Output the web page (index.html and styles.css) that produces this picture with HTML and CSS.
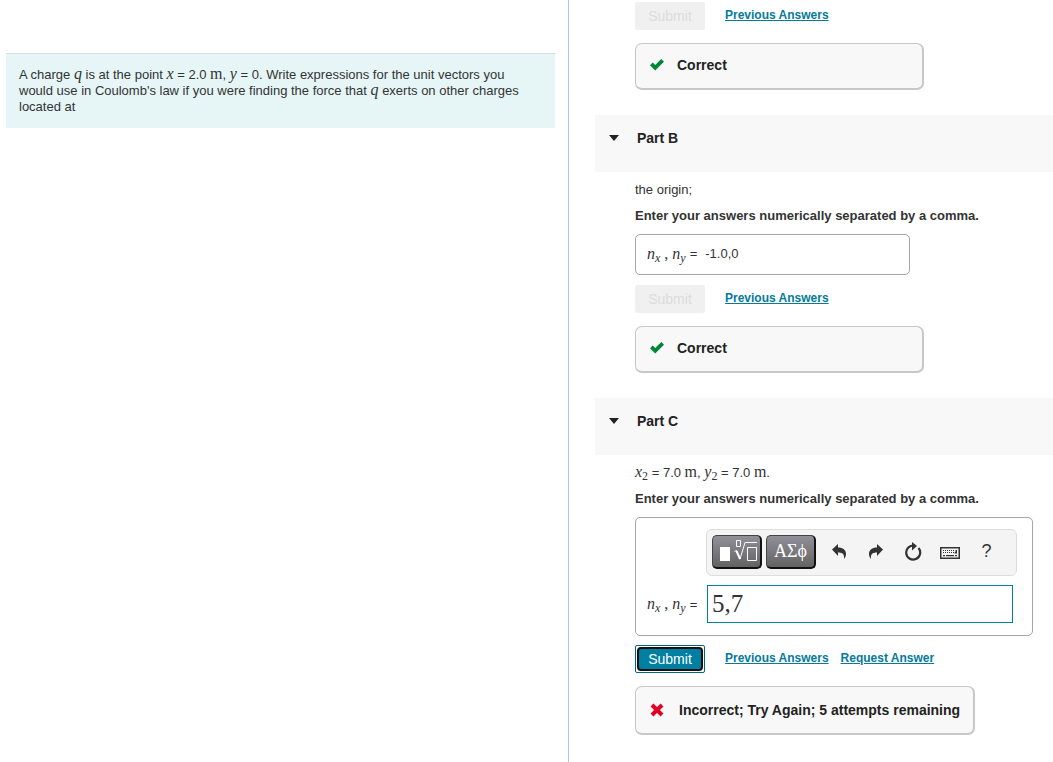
FILE: index.html
```
<!DOCTYPE html>
<html lang="en">
<head>
<meta charset="utf-8">
<title>Unit vectors</title>
<link rel="stylesheet" href="styles.css">
</head>
<body>
<main class="layout">
  <section class="question">
    <p class="prompt">A charge <i class="math">q</i> is at the point <i class="math">x</i> = 2.0 <span class="math">m</span>, <i class="math">y</i> = 0. Write expressions for the unit vectors you would use in Coulomb's law if you were finding the force that <i class="math">q</i> exerts on other charges located at</p>
  </section>
  <div class="answers">
    <section class="part">
      <div class="actions">
        <button class="submit" type="button" disabled>Submit</button>
        <a class="link" href="#">Previous Answers</a>
      </div>
      <div class="result">
        <svg class="mark" viewBox="0 0 14 12" aria-hidden="true"><path fill="#008638" d="M0 6.300 2.700 3.600 5.200 6 11.300 0 14 2.700 5.200 11.500z"/></svg>
        <span>Correct</span>
      </div>
    </section>

    <section>
      <h2 class="part-header"><button class="toggle" type="button"><svg class="caret" viewBox="0 0 10 6" aria-hidden="true"><path d="M0 0h10L5 6z"/></svg>Part B</button></h2>
      <div class="part">
        <p class="text">the origin;</p>
        <p class="instruction">Enter your answers numerically separated by a comma.</p>
        <div class="given"><span class="variables"><i>n<sub>x</sub></i> , <i>n<sub>y</sub></i></span><span>=</span><span class="value">-1.0,0</span></div>
        <div class="actions">
          <button class="submit" type="button" disabled>Submit</button>
          <a class="link" href="#">Previous Answers</a>
        </div>
        <div class="result">
          <svg class="mark" viewBox="0 0 14 12" aria-hidden="true"><path fill="#008638" d="M0 6.300 2.700 3.600 5.200 6 11.300 0 14 2.700 5.200 11.500z"/></svg>
          <span>Correct</span>
        </div>
      </div>
    </section>

    <section>
      <h2 class="part-header"><button class="toggle" type="button"><svg class="caret" viewBox="0 0 10 6" aria-hidden="true"><path d="M0 0h10L5 6z"/></svg>Part C</button></h2>
      <div class="part">
        <p class="text"><span class="math"><i>x</i><sub>2</sub></span> = 7.0 <span class="math">m</span>, <span class="math"><i>y</i><sub>2</sub></span> = 7.0 <span class="math">m</span>.</p>
        <p class="instruction">Enter your answers numerically separated by a comma.</p>
        <div class="editor">
          <div class="toolbar">
            <button class="palette" type="button" aria-label="Templates"><svg width="40" height="26" viewBox="0 0 40 26" fill="none" stroke="#fff"><path fill="#fff" stroke="none" d="M3 9h10v14H3z"/><path d="M19.500 2.500h4v6h-4zM30.500 9.500h9v13h-9zM17.500 13.500l2-1 3.500 8.500 5-16.500h12"/><path stroke-width="2" d="m19.500 13 3.500 8"/></svg></button>
            <button class="palette" type="button">ΑΣϕ</button>
            <button class="tool" type="button" aria-label="Undo"><svg width="14" height="15" viewBox="0 0 14 15"><path d="M0 5.500 6 0v3.500c5 0 8 2.500 8 6.500 0 2-.8 3.700-2 5 .5-4.500-1-6.500-6-6.500V12z"/></svg></button>
            <button class="tool" type="button" aria-label="Redo"><svg width="14" height="15" viewBox="0 0 14 15"><path d="M14 5.500 8 0v3.500C3 3.500 0 6 0 10c0 2 .8 3.700 2 5-.5-4.500 1-6.500 6-6.500V12z"/></svg></button>
            <button class="tool" type="button" aria-label="Reset"><svg width="18" height="20" viewBox="0 0 18 20"><path fill="none" stroke="#333" stroke-width="2.200" d="M11 3.800A7 7 0 1 0 14.500 6"/><path d="M8 0l5 4-5 4.500z"/></svg></button>
            <button class="tool" type="button" aria-label="Keyboard"><svg class="keyboard" width="20" height="12" viewBox="0 0 20 12"><path fill="none" stroke="#333" stroke-width="1.500" d="M.75.75h18.500v10.500H.75z"/><path fill="none" stroke="#333" stroke-dasharray="1 1" d="M3 3.500h12M3 5.500h13"/><path d="M3 8h2v1.200H3zM6 8h8v1.200H6zM15 8h2v1.200h-2zM15.500 3H17v3.500h-2.500V5.500h1z"/></svg></button>
            <button class="tool help" type="button" aria-label="Help">?</button>
          </div>
          <label class="variables answer-label" for="answer"><i>n<sub>x</sub></i> , <i>n<sub>y</sub></i> <span class="equals">=</span></label>
          <input class="answer" id="answer" type="text" value="5,7">
        </div>
        <div class="actions">
          <button class="submit focused" type="button"><span>Submit</span></button>
          <a class="link" href="#">Previous Answers</a>
          <a class="link" href="#">Request Answer</a>
        </div>
        <div class="result incorrect">
          <svg class="mark" viewBox="0 0 14 14" aria-hidden="true"><path fill="none" stroke="#e00024" stroke-width="4" d="m2 2 10 10M12 2 2 12"/></svg>
          <span>Incorrect; Try Again; 5 attempts remaining</span>
        </div>
      </div>
    </section>
  </div>
</main>
</body>
</html>
```
FILE: styles.css
```
* { box-sizing: border-box; }
body { margin: 0; background: #fff; color: #333; font: 13px/16px "Liberation Sans", Arial, sans-serif; }
h2, p { margin: 0; }
button, input { font-family: inherit; }
sub { font-size: 12px; line-height: 0; vertical-align: -3px; }
.layout { display: grid; grid-template-columns: 569fr 484fr; min-height: 100vh; }
.question { padding: 53px 13px 0 6px; border-right: 1px solid #b0c8da; }
.prompt { padding: 13px 32px 13px 13px; border-top: 1px solid #d5dfdf; background: #e6f6f6; }
.math, .variables { font-family: "Liberation Serif", "Times New Roman", serif; font-size: 16px; line-height: 14px; }
.answers { padding: 2px 0 28px 26px; }
.part { padding: 0 20px 0 40px; }
.actions { display: flex; align-items: flex-start; gap: 12px; }
.submit { width: 70px; height: 28px; margin-right: 8px; padding: 0; border: 0; border-radius: 2px; background: #007fa3; color: #fff; font-size: 14px; }
.submit:disabled { background: #f0f0f0; color: #dcdcdc; }
.submit.focused { display: flex; padding: 1px; border: 1px solid #006580; background: #fff; }
.submit.focused span { display: grid; place-items: center; width: 100%; height: 100%; border: 2px solid #111; border-radius: 4px; background: #007fa3; }
.link { padding-top: 5px; color: #047a9c; font-size: 12px; font-weight: bold; }
.result { display: flex; align-items: center; gap: 13px; width: 289px; min-height: 47px; margin: 13px 0 25px; padding: 0 14px 2px; border: 1px solid #c7c7c7; border-right-width: 2px; border-bottom-width: 2px; border-radius: 7px; background: #f8f8f8; color: #222; font-size: 14px; font-weight: bold; }
.result.incorrect { gap: 15px; width: fit-content; min-height: 49px; margin-bottom: 0; padding: 0 13px 0 14px; }
.mark { flex: none; width: 14px; }
.part-header { background: #f8f8f8; font-size: 14px; }
.toggle { display: flex; align-items: center; gap: 18px; width: 100%; min-height: 57px; padding: 0 14px 11px; border: 0; background: none; color: #222; font-size: 14px; font-weight: bold; }
.caret { width: 10px; height: 6px; fill: #222; }
.text { padding-top: 10px; }
.instruction { padding: 10px 0; font-weight: bold; }
.given { display: flex; align-items: center; gap: 4px; width: 275px; min-height: 41px; margin-bottom: 10px; padding: 0 11px 2px; border: 1px solid #a6a6a6; border-radius: 5px; }
.value { margin-left: 4px; }
.editor { display: grid; grid-template-columns: 59px 1fr; row-gap: 9px; align-items: center; margin-bottom: 9px; padding: 11px 15px 12px 11px; border: 1px solid #a6a6a6; border-radius: 5px; }
.toolbar { grid-column: 2; display: flex; align-items: center; height: 47px; padding: 0 5px 2px; border: 1px solid #ddd; border-radius: 6px; background: #f4f4f4; }
.palette { display: grid; place-items: center; width: 50px; height: 34px; margin-right: 4px; padding: 0; border: 1px solid #444; border-right: 2px solid #111; border-bottom: 2px solid #111; border-radius: 5px; background: linear-gradient(#918f99, #636363); color: #fff; font: 18px "Liberation Serif", serif; }
.tool { display: grid; place-items: center; width: 37px; height: 34px; padding: 0; border: 0; background: none; fill: #333; color: #333; }
.keyboard { margin-top: 2px; }
.help { font-size: 18px; }
.answer-label { white-space: nowrap; }
.equals { font: 13px "Liberation Sans", sans-serif; }
.answer { width: calc(100% - 5px); height: 38px; margin-left: 1px; padding: 0 4px; border: 1px solid #007fa3; color: #333; font: 25px "Liberation Serif", serif; }
```
